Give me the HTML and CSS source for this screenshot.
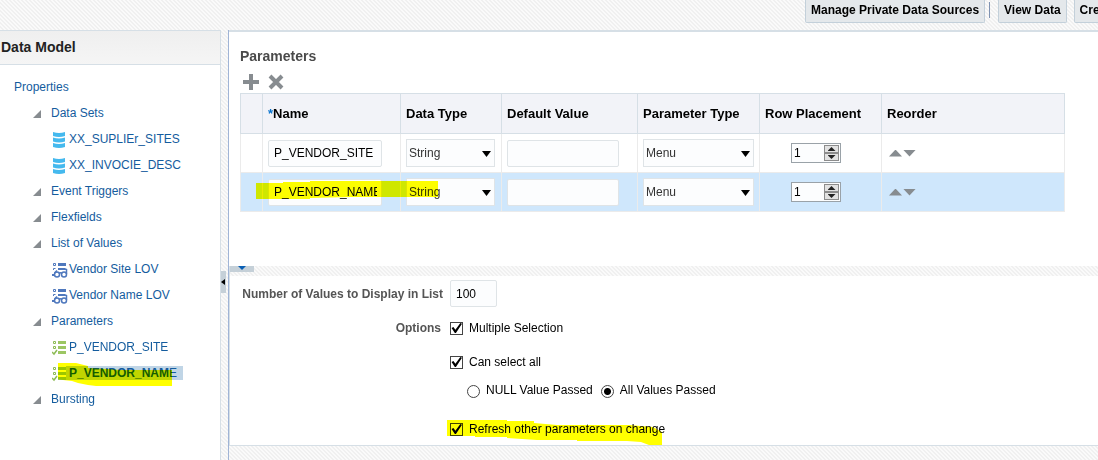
FILE: index.html
```html
<!DOCTYPE html>
<html lang="en">

<head>
    <meta charset="UTF-8">
    <meta name="viewport" content="width=device-width, initial-scale=1.0">
    <title>Data Model</title>
    <link rel="stylesheet" href="styles.css">
</head>

<body>
    <svg class="defs" width="0" height="0">
        <symbol id="db" viewBox="0 0 12 16">
            <path fill="#45b9ee" d="M0 0Q6 2 12 0V4Q6 6 0 4ZM0 5.500Q6 7.500 12 5.500V9.500Q6 11.500 0 9.500ZM0 11Q6 13 12 11V15Q6 17 0 15Z" />
        </symbol>
        <symbol id="lov" viewBox="0 0 16 16">
            <path fill="none" stroke="#4f78bd" d="M1.500 1.500h2v2h-2zM1.500 8V6.500h2" />
            <path fill="#4f78bd" d="M6 1h8v3H6zM6 6h7l1 2H6zM0 12h2v2H0z" />
            <g fill="none" stroke="#4f78bd" stroke-width="1.500">
                <circle cx="5" cy="12.500" r="2.500" />
                <circle cx="12" cy="12.500" r="2.500" />
                <path d="M7 11.500Q8.500 10 10 11.500M2.500 11L5 8.500M14.500 12V7.500L13 7" />
            </g>
        </symbol>
        <symbol id="param" viewBox="0 0 16 16">
            <path fill="none" stroke="#8dbb55" d="M1.500 1.500h2v2h-2zM1.500 6.500h2v2h-2z" />
            <path fill="none" stroke="#8dbb55" stroke-width="1.500" d="M0 12l2 2 3-4" />
            <path fill="#9cc663" d="M6 1h8v3H6zM6 6h8v3H6zM6 11h8v3H6z" />
        </symbol>
    </svg>

    <header class="topbar">
        <div class="actions">
            <button type="button">Manage Private Data Sources</button>
            <span class="divider"></span>
            <button type="button">View Data</button>
            <button type="button">Create Report</button>
        </div>
    </header>

    <div class="layout">
        <nav class="sidebar">
            <h2>Data Model</h2>
            <ul class="tree">
                <li><a href="#">Properties</a></li>
                <li class="group"><i class="twisty"></i><a href="#">Data Sets</a></li>
                <li class="leaf"><svg class="icon"><use href="#db" width="12" height="16" x="1" /></svg><a href="#">XX_SUPLIEr_SITES</a></li>
                <li class="leaf"><svg class="icon"><use href="#db" width="12" height="16" x="1" /></svg><a href="#">XX_INVOCIE_DESC</a></li>
                <li class="group"><i class="twisty"></i><a href="#">Event Triggers</a></li>
                <li class="group"><i class="twisty"></i><a href="#">Flexfields</a></li>
                <li class="group"><i class="twisty"></i><a href="#">List of Values</a></li>
                <li class="leaf"><svg class="icon"><use href="#lov" width="16" height="16" /></svg><a href="#">Vendor Site LOV</a></li>
                <li class="leaf"><svg class="icon"><use href="#lov" width="16" height="16" /></svg><a href="#">Vendor Name LOV</a></li>
                <li class="group"><i class="twisty"></i><a href="#">Parameters</a></li>
                <li class="leaf"><svg class="icon"><use href="#param" width="16" height="16" /></svg><a href="#">P_VENDOR_SITE</a></li>
                <li class="leaf marked">
                    <svg class="icon"><use href="#param" width="16" height="16" /></svg><a href="#" class="selected"><b>P_VENDOR_NAM</b>E</a>
                    <svg class="marker tree-marker" width="114" height="24" viewBox="0 0 114 24">
                        <path d="M0 0H18L30 3V5L50 6L62 7H114V23H38L30 22L20 20L14 18L5 17L0 16Z" />
                    </svg>
                </li>
                <li class="group"><i class="twisty"></i><a href="#">Bursting</a></li>
            </ul>
        </nav>

        <div class="splitter">
            <button type="button" class="collapse" aria-label="Collapse"><i></i></button>
        </div>

        <main class="content">
            <section class="params">
                <h3>Parameters</h3>
                <div class="tools">
                    <button type="button" aria-label="Add">
                        <svg width="16" height="16"><path d="M8 0v16M0 8h16" /></svg>
                    </button>
                    <button type="button" aria-label="Delete">
                        <svg width="16" height="16"><path d="M2 2l12 12M14 2L2 14" /></svg>
                    </button>
                </div>
                <table>
                    <colgroup>
                        <col class="c-mark">
                        <col class="c-name">
                        <col class="c-type">
                        <col class="c-default">
                        <col class="c-ptype">
                        <col class="c-place">
                        <col>
                    </colgroup>
                    <thead>
                        <tr>
                            <th></th>
                            <th><span class="req">*</span>Name</th>
                            <th>Data Type</th>
                            <th>Default Value</th>
                            <th>Parameter Type</th>
                            <th>Row Placement</th>
                            <th>Reorder</th>
                        </tr>
                    </thead>
                    <tbody>
                        <tr>
                            <td></td>
                            <td><input type="text" class="text" aria-label="Name" value="P_VENDOR_SITE"></td>
                            <td><span class="select"><select aria-label="Data Type"><option>String</option></select></span></td>
                            <td><input type="text" class="text short" aria-label="Default Value"></td>
                            <td><span class="select wide"><select aria-label="Parameter Type"><option>Menu</option></select></span></td>
                            <td>
                                <span class="spin">
                                    <input type="number" aria-label="Row Placement" value="1">
                                    <span class="arrows"><button type="button" class="up" aria-label="Up"></button><button type="button" class="down" aria-label="Down"></button></span>
                                </span>
                            </td>
                            <td><span class="reorder"><button type="button" class="up" aria-label="Move up"></button><button type="button" class="down" aria-label="Move down"></button></span></td>
                        </tr>
                        <tr class="current">
                            <td class="marked">
                                <svg class="marker row-marker" width="182" height="18" viewBox="0 0 182 18">
                                    <path d="M0 2H27V1H54V0H182V16H94L54 17V18H0Z" />
                                </svg>
                            </td>
                            <td><input type="text" class="text" aria-label="Name" value="P_VENDOR_NAME"></td>
                            <td><span class="select"><select aria-label="Data Type"><option>String</option></select></span></td>
                            <td><input type="text" class="text short" aria-label="Default Value"></td>
                            <td><span class="select wide"><select aria-label="Parameter Type"><option>Menu</option></select></span></td>
                            <td>
                                <span class="spin">
                                    <input type="number" aria-label="Row Placement" value="1">
                                    <span class="arrows"><button type="button" class="up" aria-label="Up"></button><button type="button" class="down" aria-label="Down"></button></span>
                                </span>
                            </td>
                            <td><span class="reorder"><button type="button" class="up" aria-label="Move up"></button><button type="button" class="down" aria-label="Move down"></button></span></td>
                        </tr>
                    </tbody>
                </table>
            </section>

            <div class="hsplit">
                <button type="button" aria-label="Collapse details"></button>
            </div>

            <form class="details">
                <label class="label" for="count">Number of Values to Display in List</label>
                <input type="text" class="text count" id="count" value="100">
                <span class="label options">Options</span>
                <div class="checks">
                    <label class="check"><input type="checkbox" checked>Multiple Selection</label>
                    <label class="check"><input type="checkbox" checked>Can select all</label>
                    <div class="radios">
                        <label><input type="radio" name="all">NULL Value Passed</label>
                        <label><input type="radio" name="all" checked>All Values Passed</label>
                    </div>
                    <div class="marked">
                        <label class="check"><input type="checkbox" checked>Refresh other parameters on change</label>
                        <svg class="marker refresh-marker" width="215" height="26" viewBox="0 0 215 26">
                            <path d="M0 0H60V1H87V3L110 5H182L206 7L215 12V25H202L194 22L180 21L130 21V20L90 20L60 18V17H28V16H0Z" />
                        </svg>
                    </div>
                </div>
            </form>
        </main>
    </div>
</body>

</html>
```

FILE: styles.css
```css
* {
    box-sizing: border-box;
}

body {
    margin: 0;
    height: 100vh;
    display: flex;
    flex-direction: column;
    overflow: hidden;
    font: 12px/16px "Liberation Sans", Arial, sans-serif;
    color: #000;
    background: linear-gradient(45deg, #f0f0f0 25%, #fafafa 25% 50%, #f0f0f0 50% 75%, #fafafa 75%) 0 0 / 4px 4px;
}

h2,
h3 {
    margin: 0;
    font-size: 14px;
}

button,
input,
select {
    margin: 0;
    padding: 0;
    border: 0;
    font: inherit;
    color: inherit;
    background: none;
}

.defs {
    position: absolute;
}

/* top bar */
.topbar {
    flex: none;
    height: 30px;
    display: flex;
    justify-content: flex-end;
}

.actions {
    flex: 0 0 293px;
    height: 23px;
    display: flex;
    overflow: hidden;
}

.actions button {
    flex: none;
    padding: 0 5px 2px;
    margin-right: 7px;
    border: 1px solid #c3d0da;
    border-top: 0;
    border-radius: 0 0 2px 2px;
    background: #e4e8eb;
    font-weight: bold;
}

.actions .divider {
    flex: none;
    width: 1px;
    height: 16px;
    margin: 2px 8px 0 -3px;
    background: #7f93b2;
}

.layout {
    flex: 1;
    min-height: 0;
    display: flex;
}

/* tree */
.sidebar {
    flex: 0 0 221px;
    border: solid #d6dfe6;
    border-width: 1px 1px 0 0;
    background: #fff;
}

.sidebar h2 {
    height: 34px;
    padding-left: 1px;
    border-bottom: 1px solid #d6dfe6;
    line-height: 33px;
    color: #222;
    background: linear-gradient(#efefef, #f5f5f5);
}

.tree {
    margin: 0;
    padding: 9px 0 0 14px;
    list-style: none;
}

.tree li {
    height: 26px;
    display: flex;
    align-items: center;
}

.tree a {
    color: #145c9e;
    text-decoration: none;
}

.tree .group {
    padding-left: 19px;
}

.tree .leaf {
    padding-left: 38px;
}

.twisty {
    width: 8px;
    height: 8px;
    margin: 2px 10px 0 0;
    background: #878c90;
    clip-path: polygon(100% 0, 100% 100%, 0 100%);
}

.icon {
    width: 16px;
    height: 16px;
    margin: 2px 1px 0 0;
}

.tree .selected {
    margin-left: -3px;
    padding: 0 6px 0 3px;
    line-height: 14px;
    background: #c0d5e6;
}

.marked {
    position: relative;
}

.marker {
    position: absolute;
    z-index: 1;
    mix-blend-mode: multiply;
    pointer-events: none;
    fill: #ff0;
}

.tree-marker {
    left: 44px;
    top: 3px;
}

.row-marker {
    left: 15px;
    top: 8px;
}

.refresh-marker {
    left: -3px;
    top: -1px;
}

/* vertical splitter */
.splitter {
    flex: 0 0 7px;
}

.collapse {
    width: 5px;
    height: 22px;
    display: flex;
    align-items: center;
    margin-top: 241px;
    background: #c5d0d8;
}

.collapse i {
    width: 4px;
    height: 6px;
    background: #000;
    clip-path: polygon(100% 0, 100% 100%, 0 50%);
}

.content {
    flex: 1;
    min-width: 0;
    border-left: 1px solid #a0b4d6;
}

.params {
    height: 236px;
    padding: 16px 33px 0 11px;
    border-top: 2px solid #d6dfe6;
    background: #fff;
}

.params h3 {
    color: #4a4a4a;
}

.tools {
    display: flex;
    gap: 9px;
    padding: 10px 0 3px 3px;
}

.tools button,
.tools svg {
    display: block;
}

.tools path {
    fill: none;
    stroke: #878c90;
    stroke-width: 4;
}

/* parameter table */
table {
    width: 100%;
    table-layout: fixed;
    border-collapse: collapse;
}

.c-mark {
    width: 22px;
}

.c-name {
    width: 138px;
}

.c-type {
    width: 101px;
}

.c-default {
    width: 136px;
}

.c-ptype,
.c-place {
    width: 122px;
}

th,
td {
    height: 39px;
    padding: 0 5px;
    text-align: left;
}

th {
    height: 40px;
    border: 1px solid #d6dfe6;
    font-size: 13px;
    background: #f2f3f8;
}

td {
    border: 1px solid #ebebeb;
}

.req {
    color: #0572ce;
}

.current {
    background: #cfe7fc;
}

.text {
    display: block;
    width: 114px;
    height: 27px;
    padding: 0 4px 0 5px;
    border: 1px solid #dfe4e7;
    border-radius: 2px;
    background: #fcfdfe;
}

.text.short {
    width: 112px;
}

.select {
    position: relative;
    display: block;
    width: 89px;
}

.select.wide {
    width: 111px;
}

.select select {
    display: block;
    width: 100%;
    height: 28px;
    padding: 0 2px 1px;
    border: 1px solid #dfe4e7;
    appearance: none;
    color: #333;
    background: #fcfdfe;
}

.select::after {
    content: "";
    position: absolute;
    right: 4px;
    top: 12px;
    width: 9px;
    height: 6px;
    background: #000;
    clip-path: polygon(0 0, 100% 0, 50% 100%);
}

.spin {
    display: flex;
    width: 50px;
    height: 20px;
    margin-left: 26px;
    padding: 1px;
    border: 1px solid #9aa2a8;
    background: #fcfdfe;
}

.spin input {
    flex: 1;
    min-width: 0;
    padding-left: 1px;
    appearance: textfield;
}

.spin input::-webkit-inner-spin-button {
    display: none;
}

.arrows {
    width: 15px;
    display: flex;
    flex-direction: column;
}

.arrows button {
    flex: 1;
    display: flex;
    align-items: center;
    justify-content: center;
    border: 1px solid #8c8c8c;
    background: #e2e2e2;
}

.arrows button::before {
    content: "";
    width: 8px;
    height: 4px;
    background: #222;
}

.arrows .up::before,
.reorder .up {
    clip-path: polygon(50% 0, 100% 100%, 0 100%);
}

.arrows .down::before,
.reorder .down {
    clip-path: polygon(0 0, 100% 0, 50% 100%);
}

.reorder {
    display: flex;
    gap: 1px;
    padding-left: 2px;
}

.reorder button {
    width: 13px;
    height: 7px;
    background: #878c90;
}

/* horizontal splitter */
.hsplit {
    height: 10px;
    border-left: 1px solid #d6dfe6;
}

.hsplit button {
    display: flex;
    justify-content: center;
    width: 24px;
    height: 6px;
    background: #c5d0d8;
}

.hsplit button::before {
    content: "";
    width: 8px;
    height: 4px;
    background: #0a5fb4;
    clip-path: polygon(0 0, 100% 0, 50% 100%);
}

/* details */
.details {
    display: grid;
    grid-template-columns: 213px 1fr;
    column-gap: 7px;
    row-gap: 13px;
    align-items: center;
    padding: 4px 0 8px;
    border: solid #d6dfe6;
    border-width: 0 0 1px 1px;
    background: #fff;
}

.label {
    font-weight: bold;
    color: #555;
    text-align: right;
}

.details .count {
    width: 47px;
}

.options {
    align-self: start;
    padding-right: 2px;
}

.check,
.radios,
.radios label {
    display: flex;
    align-items: center;
}

.check,
.radios label {
    gap: 6px;
}

.check + .check {
    margin-top: 18px;
}

.radios {
    gap: 8px;
    margin: 11px 0 23px 17px;
}

.check input,
.radios input {
    appearance: none;
    width: 13px;
    height: 13px;
    border: 1px solid #444;
    background: #fff;
}

.check input:checked::before {
    content: "";
    display: block;
    width: 11px;
    height: 11px;
    background: #000;
    clip-path: polygon(5% 50%, 22% 40%, 40% 65%, 85% 5%, 100% 12%, 45% 95%, 35% 95%);
}

.radios input {
    margin-top: 4px;
    border-radius: 50%;
}

.radios input:checked {
    background: radial-gradient(circle, #000 0 3px, #fff 4px);
}
```
